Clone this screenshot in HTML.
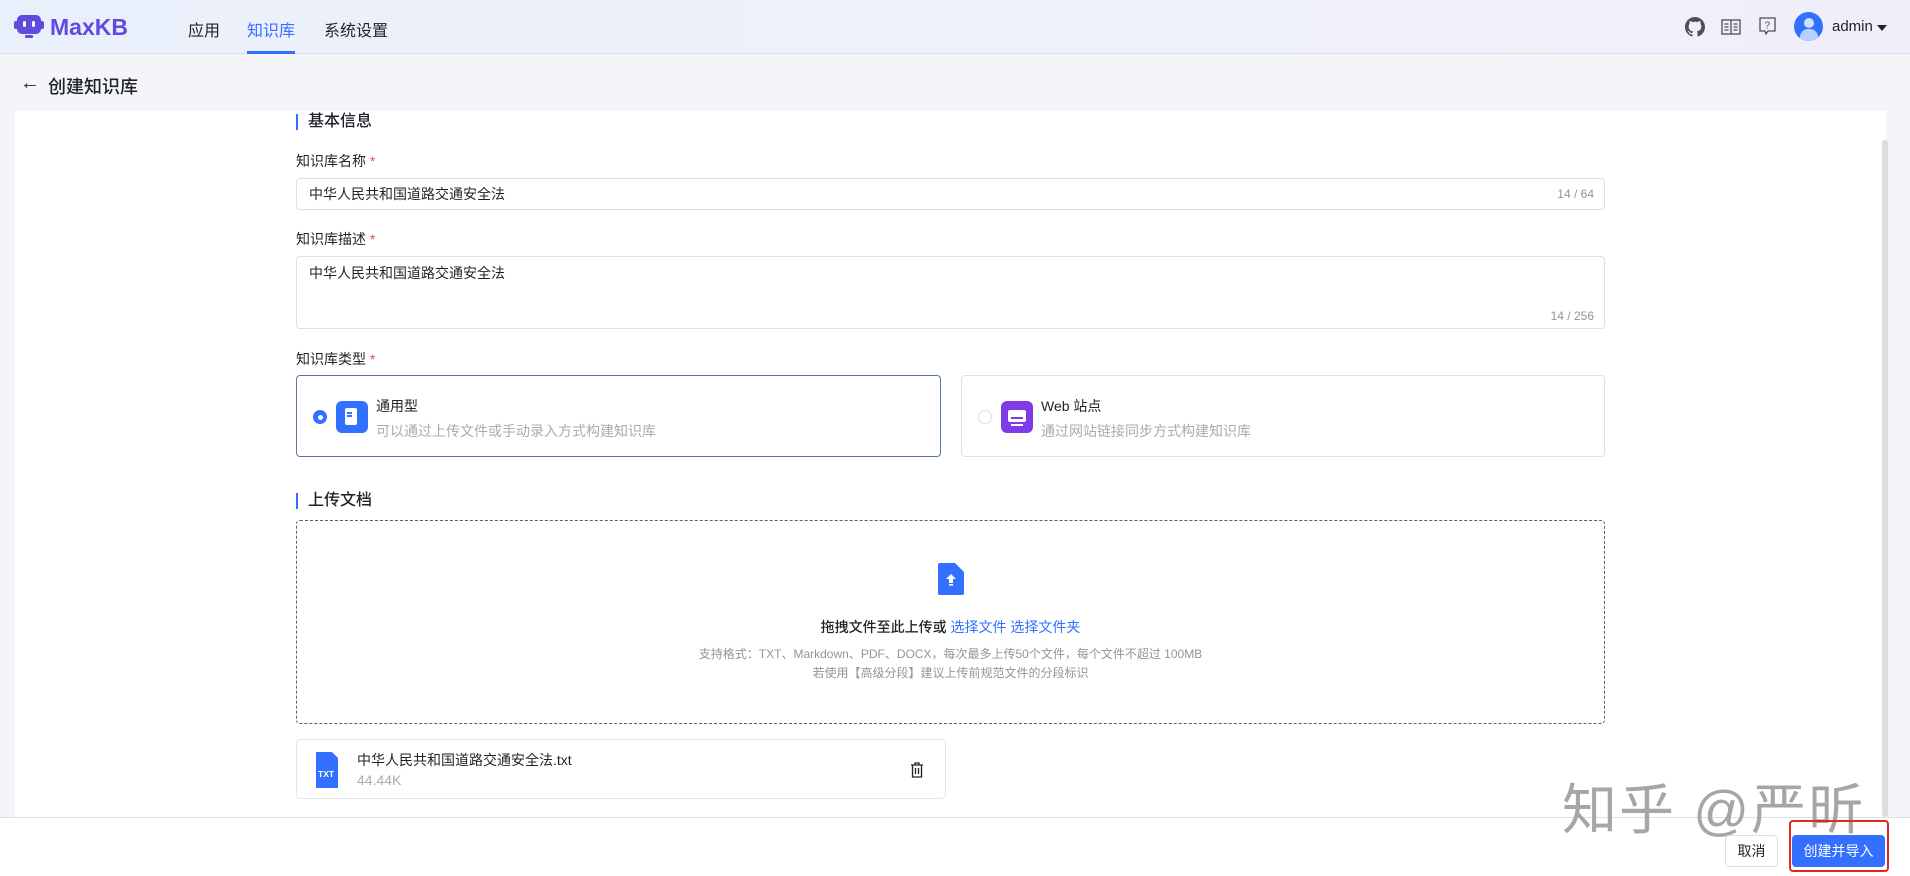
<!DOCTYPE html>
<html><head><meta charset="utf-8"><style>
*{box-sizing:border-box;margin:0;padding:0}
body{width:1910px;height:876px;overflow:hidden;background:#f4f5f9;font-family:"Liberation Sans","Noto Sans CJK SC",sans-serif;color:#1f2329;font-size:14px;position:relative}
.hdr{position:absolute;left:0;top:0;width:1910px;height:54px;background:linear-gradient(90deg,#eaf0fb,#eef1fb 60%,#f1eefb);border-bottom:1px solid #dee0e3}
.logo{position:absolute;left:14px;top:13px;display:flex;align-items:center;gap:6px;font-weight:bold;font-size:23px;color:#5f4be0}
.nav{position:absolute;top:17px;font-size:16px;color:#1f2329}
.nav.act{color:#3370ff}
.ul{position:absolute;left:247px;top:51px;width:48px;height:3px;background:#3370ff}
.abs{position:absolute}
.card{position:absolute;left:15px;top:111px;width:1871px;height:706px;background:#fff}
.sec{position:absolute;left:296px;font-size:16px;font-weight:500;padding-left:10px;border-left:2px solid #3370ff;line-height:16px}
.lbl{position:absolute;left:296px;font-size:14px;color:#1f2329}
.lbl i{color:#f54a45;font-style:normal}
.inp{position:absolute;left:296px;width:1309px;border:1px solid #dcdfe6;border-radius:4px;background:#fff;font-size:14px;padding:0 12px}
.cnt{position:absolute;right:10px;font-size:12px;color:#8f959e}
.tc{position:absolute;top:375px;height:82px;border:1px solid #dcdfe6;border-radius:4px;background:#fff}
.tc .t{position:absolute;left:79px;top:20px;font-size:14px}
.tc .d{position:absolute;left:79px;top:45px;font-size:14px;color:#a8abb2}
.ico{position:absolute;left:39px;top:25px;width:32px;height:32px;border-radius:6px}
.btn{position:absolute;top:835px;height:32px;border-radius:4px;font-size:14px;display:flex;align-items:center;justify-content:center}
</style></head><body>
<div class="hdr">
 <div class="logo"><svg width="30" height="28" viewBox="0 0 30 28"><rect x="3" y="2" width="24" height="19" rx="5" fill="#5f4be0"/><rect x="0" y="8" width="4" height="8" rx="2" fill="#5f4be0"/><rect x="26" y="8" width="4" height="8" rx="2" fill="#5f4be0"/><rect x="9" y="8" width="3" height="6" rx="1.5" fill="#fff"/><rect x="18" y="8" width="3" height="6" rx="1.5" fill="#fff"/><rect x="11" y="22" width="8" height="3" rx="1" fill="#5f4be0"/></svg>MaxKB</div>
 <div class="nav" style="left:188px">应用</div>
 <div class="nav act" style="left:247px">知识库</div>
 <div class="nav" style="left:324px">系统设置</div>
 <div class="ul"></div>
 <svg class="abs" style="left:1685px;top:17px" width="20" height="20" viewBox="0 0 16 16"><path fill="#4b4f56" d="M8 0C3.6 0 0 3.6 0 8c0 3.5 2.3 6.5 5.5 7.6.4.1.5-.2.5-.4v-1.4c-2.2.5-2.7-1-2.7-1-.4-.9-.9-1.200-.9-1.2-.7-.5.1-.5.1-.5.8.1 1.2.8 1.2.8.7 1.3 1.9.9 2.3.7.1-.5.3-.9.5-1.1-1.8-.2-3.6-.9-3.6-4 0-.9.3-1.6.8-2.1-.1-.2-.4-1 .1-2.1 0 0 .7-.2 2.2.8.6-.2 1.3-.3 2-.3s1.4.1 2 .3c1.5-1 2.2-.8 2.2-.8.4 1.1.2 1.9.1 2.1.5.6.8 1.3.8 2.1 0 3.1-1.9 3.7-3.6 3.9.3.3.5.8.5 1.5v2.2c0 .2.1.5.6.4C13.7 14.5 16 11.5 16 8c0-4.4-3.6-8-8-8z"/></svg>
 <svg class="abs" style="left:1721px;top:18px" width="20" height="18" viewBox="0 0 20 18" fill="none" stroke="#4b4f56" stroke-width="1.3"><rect x="1" y="2" width="18" height="14"/><path d="M10 2v14M3.5 6h4M3.5 9h4M3.5 12h4M12.5 6h4M12.5 9h4M12.5 12h4"/></svg>
 <svg class="abs" style="left:1759px;top:17px" width="17" height="19" viewBox="0 0 17 19" fill="none" stroke="#4b4f56" stroke-width="1.3"><path d="M1 1h15v13H9l-2 3-1-3H1z"/><text x="5.5" y="11.5" font-size="10" fill="#4b4f56" stroke="none" font-family="Liberation Sans">?</text></svg>
 <div class="abs" style="left:1794px;top:12px;width:29px;height:29px;border-radius:50%;background:#3370ff;overflow:hidden"><div class="abs" style="left:10px;top:6px;width:10px;height:10px;border-radius:50%;background:#cfe0ff"></div><div class="abs" style="left:6px;top:17px;width:18px;height:12px;border-radius:8px 8px 0 0;background:#b8d0ff"></div></div>
 <div class="abs" style="left:1832px;top:18px;font-size:15px">admin</div>
 <div class="abs" style="left:1877px;top:25px;width:0;height:0;border-left:5px solid transparent;border-right:5px solid transparent;border-top:6px solid #1f2329"></div>
</div>
<div class="abs" style="left:20px;top:72px;font-size:20px;color:#1f2329">←</div>
<div class="abs" style="left:48px;top:73px;font-size:18px;font-weight:500">创建知识库</div>
<div class="card"></div>
<div class="abs" style="left:1882px;top:140px;width:6px;height:677px;background:#dcdde0;border-radius:3px"></div>
<div class="sec" style="top:114px">基本信息</div>
<div class="lbl" style="top:151px">知识库名称 <i>*</i></div>
<div class="inp" style="top:178px;height:32px;line-height:30px">中华人民共和国道路交通安全法<span class="cnt" style="top:0">14 / 64</span></div>
<div class="lbl" style="top:229px">知识库描述 <i>*</i></div>
<div class="inp" style="top:256px;height:73px;padding-top:6px;line-height:20px">中华人民共和国道路交通安全法<span class="cnt" style="top:52px;line-height:14px">14 / 256</span></div>
<div class="lbl" style="top:349px">知识库类型 <i>*</i></div>
<div class="tc" style="left:296px;width:645px;border-color:#5b7a9d">
 <div class="abs" style="left:16px;top:34px;width:14px;height:14px;border-radius:50%;background:#3370ff"><div class="abs" style="left:4.5px;top:4.5px;width:5px;height:5px;border-radius:50%;background:#fff"></div></div>
 <div class="ico" style="background:#3370ff"><div class="abs" style="left:9px;top:7px;width:12px;height:17px;border-radius:2px;background:#fff"></div><div class="abs" style="left:11px;top:11px;width:5px;height:1.5px;background:#3370ff"></div><div class="abs" style="left:11px;top:14px;width:5px;height:1.5px;background:#3370ff"></div></div>
 <div class="t">通用型</div><div class="d">可以通过上传文件或手动录入方式构建知识库</div>
</div>
<div class="tc" style="left:961px;width:644px">
 <div class="abs" style="left:16px;top:34px;width:14px;height:14px;border-radius:50%;border:1px solid #dcdfe6"></div>
 <div class="ico" style="background:#7f3be6"><div class="abs" style="left:7px;top:9px;width:18px;height:12px;border-radius:2px;background:#fff"></div><div class="abs" style="left:10px;top:16px;width:12px;height:2px;background:#7f3be6"></div><div class="abs" style="left:10px;top:23px;width:12px;height:2px;background:#fff"></div></div>
 <div class="t">Web 站点</div><div class="d">通过网站链接同步方式构建知识库</div>
</div>
<div class="sec" style="top:493px">上传文档</div>
<div class="abs" style="left:296px;top:520px;width:1309px;height:204px;border:1px dashed #3a6b8f;border-radius:4px"></div>
<svg class="abs" style="left:938px;top:563px" width="26" height="32" viewBox="0 0 26 32"><path d="M2 0h15l9 9v21a2 2 0 0 1-2 2H2a2 2 0 0 1-2-2V2a2 2 0 0 1 2-2z" fill="#3370ff"/><path d="M13 11l-5 5h3v4h4v-4h3z" fill="#fff"/><rect x="11" y="21" width="4" height="1.5" fill="#fff"/></svg>
<div class="abs" style="left:296px;width:1309px;top:617px;text-align:center;font-size:14px;font-weight:500">拖拽文件至此上传或 <span style="color:#3370ff;font-weight:400">选择文件 选择文件夹</span></div>
<div class="abs" style="left:296px;width:1309px;top:645px;text-align:center;font-size:12px;color:#8f959e">支持格式：TXT、Markdown、PDF、DOCX，每次最多上传50个文件，每个文件不超过 100MB</div>
<div class="abs" style="left:296px;width:1309px;top:664px;text-align:center;font-size:12px;color:#8f959e">若使用【高级分段】建议上传前规范文件的分段标识</div>
<div class="abs" style="left:296px;top:739px;width:650px;height:60px;border:1px solid #e4e6ea;border-radius:4px;background:#fff">
 <svg class="abs" style="left:19px;top:12px" width="22" height="36" viewBox="0 0 22 36"><path d="M1 0h15l6 6v29a1 1 0 0 1-1 1H1a1 1 0 0 1-1-1V1a1 1 0 0 1 1-1z" fill="#3370ff"/><text x="2" y="25" font-size="8.5" font-weight="bold" fill="#fff" font-family="Liberation Sans">TXT</text></svg>
 <div class="abs" style="left:60px;top:10px;font-size:14px">中华人民共和国道路交通安全法.txt</div>
 <div class="abs" style="left:60px;top:32px;font-size:14px;color:#a8abb2">44.44K</div>
 <svg class="abs" style="left:613px;top:22px" width="14" height="16" viewBox="0 0 14 16" fill="none" stroke="#1f2329" stroke-width="1.3"><path d="M1 3h12M5 3V1h4v2M2.5 3v12h9V3M5.5 6v6M8.5 6v6"/></svg>
</div>
<div class="abs" style="left:0;top:817px;width:1910px;height:59px;background:#fff;border-top:1px solid #dee0e3"></div>
<div class="abs" style="left:1562px;top:765px;font-size:55px;color:#a6a6a6;letter-spacing:2px;white-space:nowrap">知乎 @严昕</div>
<div class="btn" style="left:1725px;width:53px;border:1px solid #dcdfe6;background:#fff">取消</div>
<div class="btn" style="left:1792px;width:93px;background:#3370ff;color:#fff">创建并导入</div>
<div class="abs" style="left:1789px;top:820px;width:100px;height:52px;border:2px solid #e0281e;border-radius:4px"></div>
</body></html>
